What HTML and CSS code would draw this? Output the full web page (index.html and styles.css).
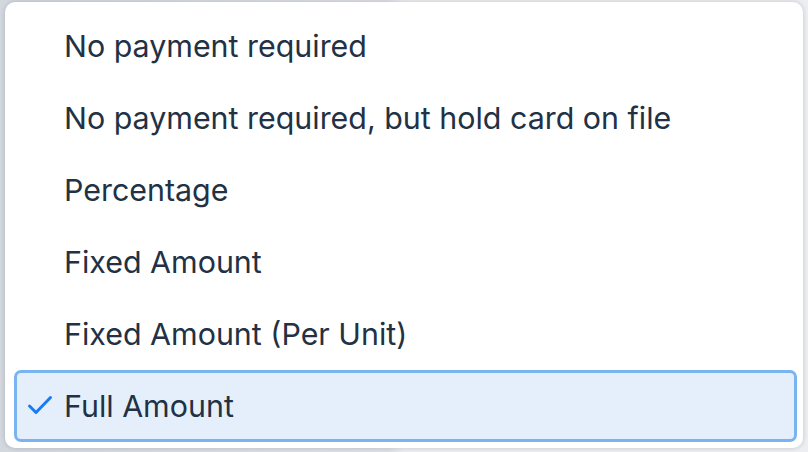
FILE: index.html
```html
<!DOCTYPE html>
<html lang="en">

<head>
  <meta charset="UTF-8" />
  <meta name="viewport" content="width=device-width, initial-scale=1" />
  <title>Payment options</title>
  <link rel="stylesheet" href="styles.css">
</head>

<body>
  <div class="menu" role="listbox" aria-label="Payment options">
    <div class="menu-item" role="option">No payment required</div>
    <div class="menu-item" role="option">No payment required, but hold card on file</div>
    <div class="menu-item" role="option">Percentage</div>
    <div class="menu-item" role="option">Fixed Amount</div>
    <div class="menu-item" role="option">Fixed Amount (Per Unit)</div>
    <div class="menu-item selected" role="option" aria-selected="true">
      <svg class="check" viewBox="0 0 26 20" width="26" height="20" aria-hidden="true">
        <path d="M2.5 11 L9 17.5 L23.5 2.5" fill="none" stroke="#1a7cf0" stroke-width="3" stroke-linecap="round" stroke-linejoin="round" />
      </svg>
      Full Amount
    </div>
  </div>
</body>

</html>
```

FILE: styles.css
```css
* {
  margin: 0;
  padding: 0;
  box-sizing: border-box;
}

html,
body {
  height: 100%;
}

body {
  background: linear-gradient(90deg, #d3d7de 0%, #dde0e5 48%, #eceef1 50%, #eceef1 100%);
  font-family: Inter, "Noto Sans", sans-serif;
  color: #223144;
  padding: 2px 5px 4px 5px;
  overflow: hidden;
}

.menu {
  background: #ffffff;
  border-radius: 10px;
  height: 446px;
  padding: 8px 6px 6px 9px;
  display: flex;
  flex-direction: column;
  box-shadow: 0 0 4px rgba(60, 70, 90, 0.25);
}

.menu-item {
  height: 72px;
  display: flex;
  align-items: center;
  padding-left: 47px;
  font-size: 30.4px;
  border: 3px solid transparent;
  border-radius: 7px;
  position: relative;
}

.menu-item.selected {
  background: #e5effc;
  border-color: #7ab3f1;
}

.check {
  position: absolute;
  left: 10px;
  top: 22px;
}
```
